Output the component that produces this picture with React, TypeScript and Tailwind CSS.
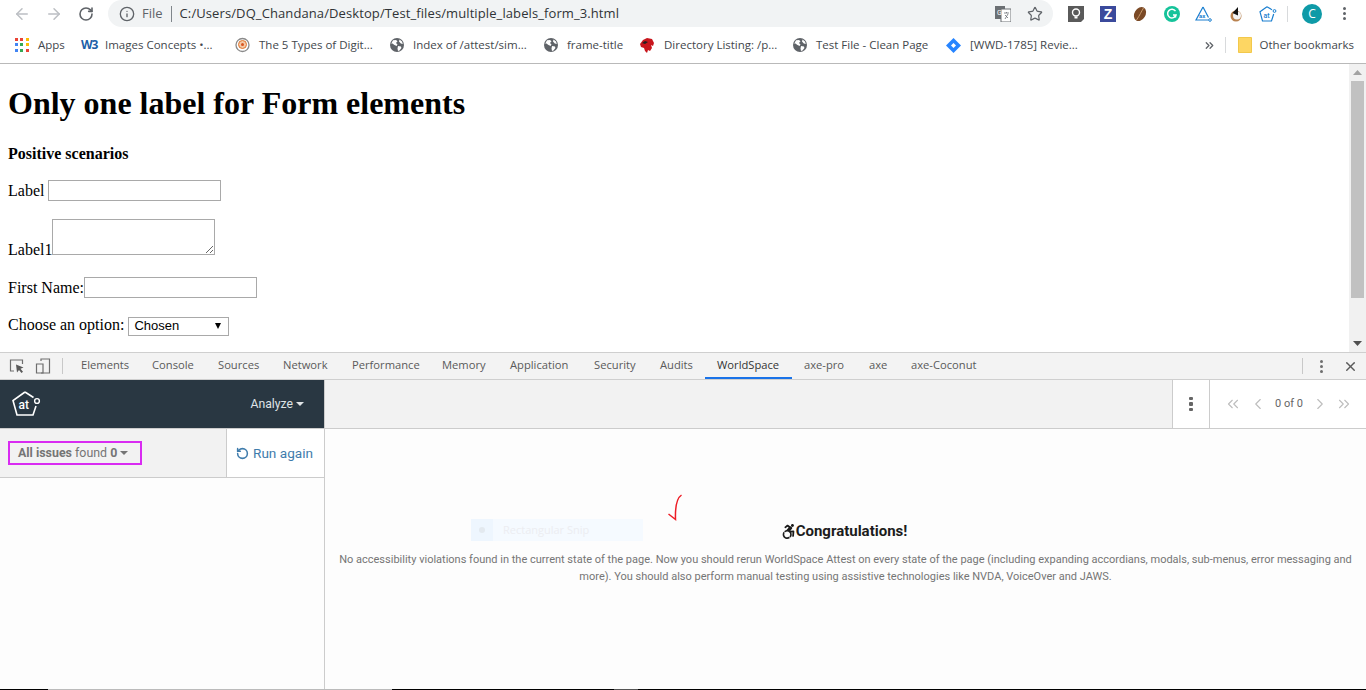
import React from 'react';
import { ArrowLeft, ArrowRight, RotateCw, Info, Star, X, ChevronLeft, ChevronRight, ChevronsLeft, ChevronsRight, RotateCcw } from 'lucide-react';
import { FaAccessibleIcon } from 'react-icons/fa';

const Globe: React.FC = () => (
  <svg width="14" height="14" viewBox="0 0 14 14" className="shrink-0">
    <circle cx="7" cy="7" r="7" fill="#5f6368" />
    <path d="M3 2.2 6 2l1.5 1.2L6 5 7.5 6.5 6.6 8 4.5 7 2 5.2 1 6ZM8 8l3 .5.4 1.6L9.500 12.500 8 13 7.500 10.500ZM9.500 1.500l2.500 2 .8 2.500-2-.5L9 3.500Z" fill="#fff" />
  </svg>
);

const AppsIcon: React.FC = () => {
  const colors = ['#ea4335', '#ea4335', '#fbbc04', '#4285f4', '#34a853', '#fbbc04', '#4285f4', '#34a853', '#ea4335'];
  return (
    <div className="grid grid-cols-3 gap-[2px] w-[14px] h-[14px] shrink-0">
      {colors.map((c, i) => (
        <svg key={i} width="3" height="3" viewBox="0 0 3 3"><rect width="3" height="3" fill={c} /></svg>
      ))}
    </div>
  );
};

const bookmarks = [
  { label: 'Images Concepts •...', width: 'w-[154px]', icon: <span className="w-[15px] text-[12px] leading-none font-bold text-[#1c5fa8] tracking-[-1px] shrink-0">W3</span> },
  {
    label: 'The 5 Types of Digit...',
    width: 'w-[155px]',
    icon: (
      <svg width="15" height="16" viewBox="0 0 15 16" className="shrink-0">
        <circle cx="7.500" cy="8" r="6.500" fill="none" stroke="#8a8a8a" strokeWidth="1.300" />
        <circle cx="7.500" cy="7.500" r="4" fill="#f3c9a8" stroke="#e0762c" strokeWidth="1" />
        <circle cx="7.500" cy="7.500" r="1.500" fill="#d9541e" />
      </svg>
    ),
  },
  { label: 'Index of /attest/sim...', width: 'w-[154px]', icon: <Globe /> },
  { label: 'frame-title', width: 'w-[95px]', icon: <Globe /> },
  {
    label: 'Directory Listing: /p...',
    width: 'w-[154px]',
    icon: (
      <svg width="16" height="15" viewBox="0 0 16 15" className="shrink-0">
        <path d="M1 6 4 2l4-2 5 1 2 4-1 3-2-1 1 3-2 3-2-1-1 3-2-2-1-3-3-1Z" fill="#c8161d" />
        <path d="M3 5 6 3l3 1-3 2Z" fill="#222" />
      </svg>
    ),
  },
  { label: 'Test File - Clean Page', width: 'w-[153px]', icon: <Globe /> },
  {
    label: '[WWD-1785] Revie...',
    width: 'w-[140px]',
    icon: (
      <svg width="15" height="15" viewBox="0 0 15 15" className="shrink-0">
        <path d="M7.500 0 15 7.500 7.500 15 0 7.500Z" fill="#2684ff" />
        <path d="M7.500 5 10 7.500 7.500 10 5 7.500Z" fill="#fff" />
      </svg>
    ),
  },
];

const extensions = [
  <svg key="bulb" width="16" height="16" viewBox="0 0 16 16">
    <path d="M0 0h16v13l-3 3H0Z" fill="#5a5a5a" />
    <circle cx="8" cy="6.500" r="3.500" fill="none" stroke="#fff" strokeWidth="1.400" />
    <path d="M6.500 10.500h3v2h-3Z" fill="#fff" />
  </svg>,
  <div key="z" className="w-4 h-4 bg-[#3b4a9c] text-white text-[14px] leading-4 font-bold text-center font-['Liberation_Sans',sans-serif]">Z</div>,
  <svg key="bean" width="16" height="16" viewBox="0 0 16 16">
    <ellipse cx="8" cy="8" rx="5.500" ry="7.500" transform="rotate(30 8 8)" fill="#7b4a26" />
    <path d="M11.500 2C9 6 8 9 4.500 14" stroke="#c99a6b" strokeWidth="1" fill="none" />
  </svg>,
  <svg key="g" width="16" height="16" viewBox="0 0 16 16">
    <circle cx="8" cy="8" r="8" fill="#15c39a" />
    <path d="M11.500 5.200A4.300 4.300 0 1 0 12 9H9" fill="none" stroke="#fff" strokeWidth="1.500" />
    <path d="M11.500 9v2.500" stroke="#fff" strokeWidth="1.500" />
  </svg>,
  <svg key="axe" width="18" height="16" viewBox="0 0 18 16">
    <path d="M8 1 1 14h12.500" fill="none" stroke="#1a7fd0" strokeWidth="1.200" />
    <path d="M8 1l5.500 10.500" fill="none" stroke="#1a7fd0" strokeWidth="1.200" />
    <circle cx="15" cy="14" r="1.300" fill="none" stroke="#1a7fd0" />
    <text x="4" y="12" fontSize="6" fontWeight="700" fill="#1a7fd0" fontFamily="Roboto, sans-serif">ax</text>
  </svg>,
  <svg key="ball" width="16" height="16" viewBox="0 0 16 16">
    <circle cx="8" cy="10" r="5.500" fill="#b9824f" />
    <circle cx="9" cy="9.500" r="4" fill="#f2f2f2" />
    <path d="M10 1v8.500L4.500 7Z" fill="#111" />
  </svg>,
  <svg key="at" width="18" height="16" viewBox="0 0 18 16">
    <path d="M8 .8 1 5.800 3.500 15h9l2.200-7" fill="none" stroke="#1a7fd0" strokeWidth="1.200" />
    <path d="M8 .8l5 3" fill="none" stroke="#1a7fd0" strokeWidth="1.200" />
    <circle cx="15.500" cy="5" r="1.400" fill="none" stroke="#1a7fd0" />
    <text x="4.500" y="11.500" fontSize="7" fontWeight="500" fill="#1a7fd0" fontFamily="Roboto, sans-serif">at</text>
  </svg>,
];

const tabs = [
  { name: 'Elements', width: 'w-[71px]' },
  { name: 'Console', width: 'w-[66px]' },
  { name: 'Sources', width: 'w-[65px]' },
  { name: 'Network', width: 'w-[69px]' },
  { name: 'Performance', width: 'w-[90px]' },
  { name: 'Memory', width: 'w-[68px]' },
  { name: 'Application', width: 'w-[84px]' },
  { name: 'Security', width: 'w-[66px]' },
  { name: 'Audits', width: 'w-[57px]' },
  { name: 'WorldSpace', width: 'w-[87px]', active: true },
  { name: 'axe-pro', width: 'w-[65px]' },
  { name: 'axe', width: 'w-[42px]' },
  { name: 'axe-Coconut', width: 'w-[90px]' },
];

const Dots: React.FC<{ dot: string }> = ({ dot }) => (
  <div className="flex flex-col gap-[2px] items-center">
    <div className={dot} />
    <div className={dot} />
    <div className={dot} />
  </div>
);

const App: React.FC = () => {
  return (
    <div className="w-[1366px] h-[690px] overflow-hidden bg-white flex flex-col relative font-['Open_Sans',sans-serif]">
      {/* browser toolbar */}
      <div className="h-[33px] flex items-start shrink-0">
        <div className="w-[108px] h-[27px] flex items-center pl-[13px] gap-[14px] text-[#bcbfc3]">
          <ArrowLeft size={18} strokeWidth={2} />
          <ArrowRight size={18} strokeWidth={2} />
          <RotateCw size={16} strokeWidth={2.4} className="text-[#5f6368] ml-[1px]" />
        </div>
        <div className="w-[945px] h-[27px] bg-[#f1f3f4] rounded-[14px] flex items-center pl-[11px] text-[13px] text-[#5f6368]">
          <Info size={16} strokeWidth={2} className="text-[#5f6368]" />
          <span className="ml-[7px]">File</span>
          <div className="w-px h-[16px] bg-[#80868b] ml-[8px]" />
          <span className="ml-[8px] text-[#303336] tracking-[0.1px]">C:/Users/DQ_Chandana/Desktop/Test_files/multiple_labels_form_3.html</span>
          <div className="ml-auto flex items-center gap-[16px] pr-[10px]">
            <svg width="16" height="16" viewBox="0 0 16 16">
              <rect x="0" y="0" width="10" height="13" fill="#6b6f73" />
              <rect x="6" y="3" width="10" height="13" fill="#fff" stroke="#6b6f73" />
              <text x="2" y="9" fontSize="7" fill="#fff" fontFamily="Roboto, sans-serif">G</text>
              <path d="M9 7h5M11.500 6v1M10 13l3-5M10 9l3 3" stroke="#6b6f73" strokeWidth="0.800" fill="none" />
            </svg>
            <Star size={16} strokeWidth={1.8} className="text-[#5f6368]" />
          </div>
        </div>
        <div className="flex-1 flex items-center h-[27px] pl-[14px]">
          <div className="flex items-center gap-[14px]">
            {extensions.map((e, i) => (
              <div key={i} className="w-[18px] flex justify-center">{e}</div>
            ))}
          </div>
          <div className="w-px h-4 bg-[#d8dadc] ml-[10px]" />
          <div className="w-5 h-5 rounded-full bg-[#0e9aa7] text-white text-[12px] leading-5 text-center ml-[14px]">C</div>
          <div className="ml-[21px]"><Dots dot="w-[3px] h-[3px] rounded-full bg-[#5f6368]" /></div>
        </div>
      </div>

      {/* bookmarks bar */}
      <div className="h-[31px] border-b border-[#b9b9b9] flex items-center text-[11.5px] text-[#43474c] shrink-0 pb-[6px]">
        <div className="w-[81px] pl-[15px] flex items-center gap-[9px]">
          <AppsIcon />
          <span>Apps</span>
        </div>
        {bookmarks.map((b) => (
          <div key={b.label} className={`${b.width} flex items-center gap-[9px] whitespace-nowrap shrink-0`}>
            {b.icon}
            <span>{b.label}</span>
          </div>
        ))}
        <div className="ml-auto flex items-center">
          <ChevronsRight size={13} strokeWidth={2.4} className="text-[#5f6368]" />
          <div className="w-px h-4 bg-[#d8dadc] ml-[9px]" />
          <svg width="14" height="16" viewBox="0 0 14 16" className="ml-[12px]">
            <path d="M.5 .5h13v15H.5Z" fill="#fdd663" stroke="#f2c84b" />
          </svg>
          <span className="ml-[8px] mr-[12px]">Other bookmarks</span>
        </div>
      </div>

      {/* inspected page */}
      <div className="h-[288px] flex shrink-0 overflow-hidden font-['Liberation_Serif',serif] text-[16px] leading-[18px] text-black">
        <div className="flex-1 pl-2 overflow-hidden">
          <h1 className="mt-[21px] mb-[23px] text-[32px] leading-[37px] font-bold">Only one label for Form elements</h1>
          <p className="mt-4 mb-[17px] font-bold">Positive scenarios</p>
          <p className="mt-4 mb-[18px]">
            Label <input className="w-[173px] h-[21px] border border-[#a9a9a9] bg-white align-baseline" />
          </p>
          <p className="mt-4 mb-[18px]">
            Label1<textarea className="w-[163px] h-[36px] border border-[#a9a9a9] bg-white inline-block align-baseline" />
          </p>
          <p className="mt-4 mb-[18px]">
            First Name:<input className="w-[173px] h-[21px] border border-[#a9a9a9] bg-white align-baseline" />
          </p>
          <p className="my-4">
            Choose an option:{' '}
            <span className="inline-flex w-[101px] h-[19px] border border-[#a9a9a9] items-center justify-between pl-[5px] pr-[7px] text-[13px] font-['Liberation_Sans',sans-serif] align-baseline">
              Chosen
              <svg width="6" height="6" viewBox="0 0 6 6"><path d="M0 0h6L3 6Z" fill="#000" /></svg>
            </span>
          </p>
        </div>
        <div className="w-[17px] bg-[#f1f1f1] flex flex-col items-center shrink-0">
          <div className="h-[17px] flex items-center justify-center">
            <svg width="9" height="5" viewBox="0 0 9 5"><path d="M4.500 0 9 5H0Z" fill="#a3a3a3" /></svg>
          </div>
          <div className="w-[13px] h-[217px] bg-[#c1c1c1]" />
          <div className="flex-1 flex items-end pb-[6px]">
            <svg width="9" height="5" viewBox="0 0 9 5"><path d="M0 0h9L4.500 5Z" fill="#505050" /></svg>
          </div>
        </div>
      </div>

      {/* devtools tab strip */}
      <div className="h-[28px] bg-[#f3f3f3] border-y border-[#cfcfcf] flex items-stretch text-[11.2px] text-[#5a5a5a] shrink-0">
        <div className="w-[63px] flex items-center pl-[9px]">
          <svg width="16" height="16" viewBox="0 0 16 16" className="shrink-0">
            <path d="M5 13H1.500V2h12v4" fill="none" stroke="#6e6e6e" strokeWidth="1.200" />
            <path d="M7 6.500l7.500 3-3 1.200 2.500 3-1.500 1.200-2.500-3-2 2.500Z" fill="#5a5a5a" />
          </svg>
          <svg width="16" height="16" viewBox="0 0 16 16" className="shrink-0 ml-[10px]">
            <path d="M6 3V1h8.500v14H6" fill="none" stroke="#6e6e6e" strokeWidth="1.200" />
            <path d="M1.500 6h6.500v9H1.500Z" fill="none" stroke="#6e6e6e" strokeWidth="1.200" />
          </svg>
          <div className="w-px h-4 bg-[#c8c8c8] ml-auto" />
        </div>
        <div className="w-[6px]" />
        {tabs.map((t) => (
          <div
            key={t.name}
            className={`${t.width} flex items-center pl-[12px] whitespace-nowrap border-b-2 ${t.active ? 'border-[#1a73e8] text-[#333]' : 'border-transparent'}`}
          >
            {t.name}
          </div>
        ))}
        <div className="ml-auto flex items-center">
          <div className="w-px h-4 bg-[#c8c8c8]" />
          <div className="w-[37px] flex justify-center"><Dots dot="w-[3px] h-[3px] rounded-full bg-[#6e6e6e]" /></div>
          <X size={15} strokeWidth={2.2} className="text-[#5a5a5a] mr-[8px] ml-[3px]" />
        </div>
      </div>

      {/* worldspace panel */}
      <div className="flex-1 flex min-h-0 bg-[#fdfdfd] font-['Roboto',sans-serif]">
        <div className="w-[325px] border-r border-[#cccccc] flex flex-col shrink-0">
          <div className="h-[48px] bg-[#293742] flex items-center justify-between pl-[12px] pr-[20px] shrink-0">
            <svg width="29" height="26" viewBox="0 0 29 26">
              <path d="M13 1 1 9.500 5 24h16l3-9" fill="none" stroke="#fff" strokeWidth="1.600" />
              <path d="M13 1 21.500 6.500" fill="none" stroke="#fff" strokeWidth="1.600" />
              <circle cx="25" cy="10" r="2.400" fill="none" stroke="#fff" strokeWidth="1.400" />
              <text x="6.500" y="18" fontSize="12" fontWeight="500" fill="#fff" fontFamily="Roboto, sans-serif">at</text>
            </svg>
            <div className="flex items-center gap-[3px] text-[12.2px] text-[#dfe3e6]">
              Analyze
              <svg width="8" height="4" viewBox="0 0 8 4"><path d="M0 0h8L4 4Z" fill="#dfe3e6" /></svg>
            </div>
          </div>
          <div className="h-[50px] border-y border-[#cccccc] flex shrink-0">
            <div className="w-[227px] bg-[#f2f2f2] flex items-center pl-[8px] border-r border-[#cccccc]">
              <div className="w-[134px] h-[24px] border-2 border-[#d92bf2] flex items-center pl-[8px] gap-[3px] text-[12.4px] text-[#757575]">
                <span><span className="font-bold">All issues</span> found <span className="font-bold">0</span></span>
                <svg width="8" height="4" viewBox="0 0 8 4"><path d="M0 0h8L4 4Z" fill="#757575" /></svg>
              </div>
            </div>
            <div className="flex-1 bg-white flex items-center pl-[9px] gap-[4px] text-[13.6px] text-[#3f7cac]">
              <RotateCcw size={13} strokeWidth={2.8} />
              Run again
            </div>
          </div>
        </div>
        <div className="flex-1 flex flex-col min-w-0">
          <div className="h-[49px] border-b border-[#cccccc] flex bg-[#f2f2f2] shrink-0">
            <div className="flex-1" />
            <div className="w-[36px] bg-white border-x border-[#cccccc] flex items-center justify-center box-content">
              <Dots dot="w-1 h-[3.5px] rounded-[1px] bg-[#666]" />
            </div>
            <div className="w-[156px] bg-white flex items-center text-[11px] text-[#666] pl-[14px]">
              <ChevronsLeft size={18} strokeWidth={1.5} className="text-[#bdbdbd]" />
              <ChevronLeft size={18} strokeWidth={1.5} className="text-[#bdbdbd] ml-[7px]" />
              <span className="ml-[8px] whitespace-nowrap">0 of 0</span>
              <ChevronRight size={18} strokeWidth={1.5} className="text-[#bdbdbd] ml-[8px]" />
              <ChevronsRight size={18} strokeWidth={1.5} className="text-[#bdbdbd] ml-[6px]" />
            </div>
          </div>
          <div className="flex-1 flex flex-col items-center pt-[92px] px-[13px]">
            <div className="flex items-center text-[15px] font-bold text-[#1c1c1c] leading-[20px] ml-[-3px]">
              <FaAccessibleIcon size={15} />
              Congratulations!
            </div>
            <p className="mt-[10px] text-center text-[11px] leading-[17px] text-[#757575]">
              No accessibility violations found in the current state of the page. Now you should rerun WorldSpace Attest on every state of the page (including expanding accordians, modals, sub-menus, error messaging and more). You should also perform manual testing using assistive technologies like NVDA, VoiceOver and JAWS.
            </p>
          </div>
        </div>
      </div>

      {/* bottom edge of the capture */}
      <div className="h-px flex shrink-0">
        <div className="w-[48px] bg-black" />
        <div className="w-[344px] bg-[#bbbbbb]" />
        <div className="w-[222px] bg-black" />
        <div className="w-[24px] bg-[#555555]" />
        <div className="flex-1 bg-black" />
      </div>

      {/* snip tool ghost and pen mark lying over the page */}
      <div className="absolute left-[471px] top-[519px] w-[172px] h-[22px] bg-[#f5faff] flex items-center text-[11px] text-[#ecedf1]">
        <div className="w-[22px] h-full bg-[#eef6fe] flex items-center justify-center">
          <div className="w-[6px] h-[6px] rounded-full bg-[#e3e9ef]" />
        </div>
        <span className="ml-[10px]">Rectangular Snip</span>
      </div>
      <svg className="absolute left-[666px] top-[493px]" width="18" height="30" viewBox="0 0 18 30">
        <path d="M15.500 2C11 5 9 12 9.500 26.500L2.500 21" fill="none" stroke="#ee1c25" strokeWidth="1.500" />
      </svg>
    </div>
  );
};

export default App;
